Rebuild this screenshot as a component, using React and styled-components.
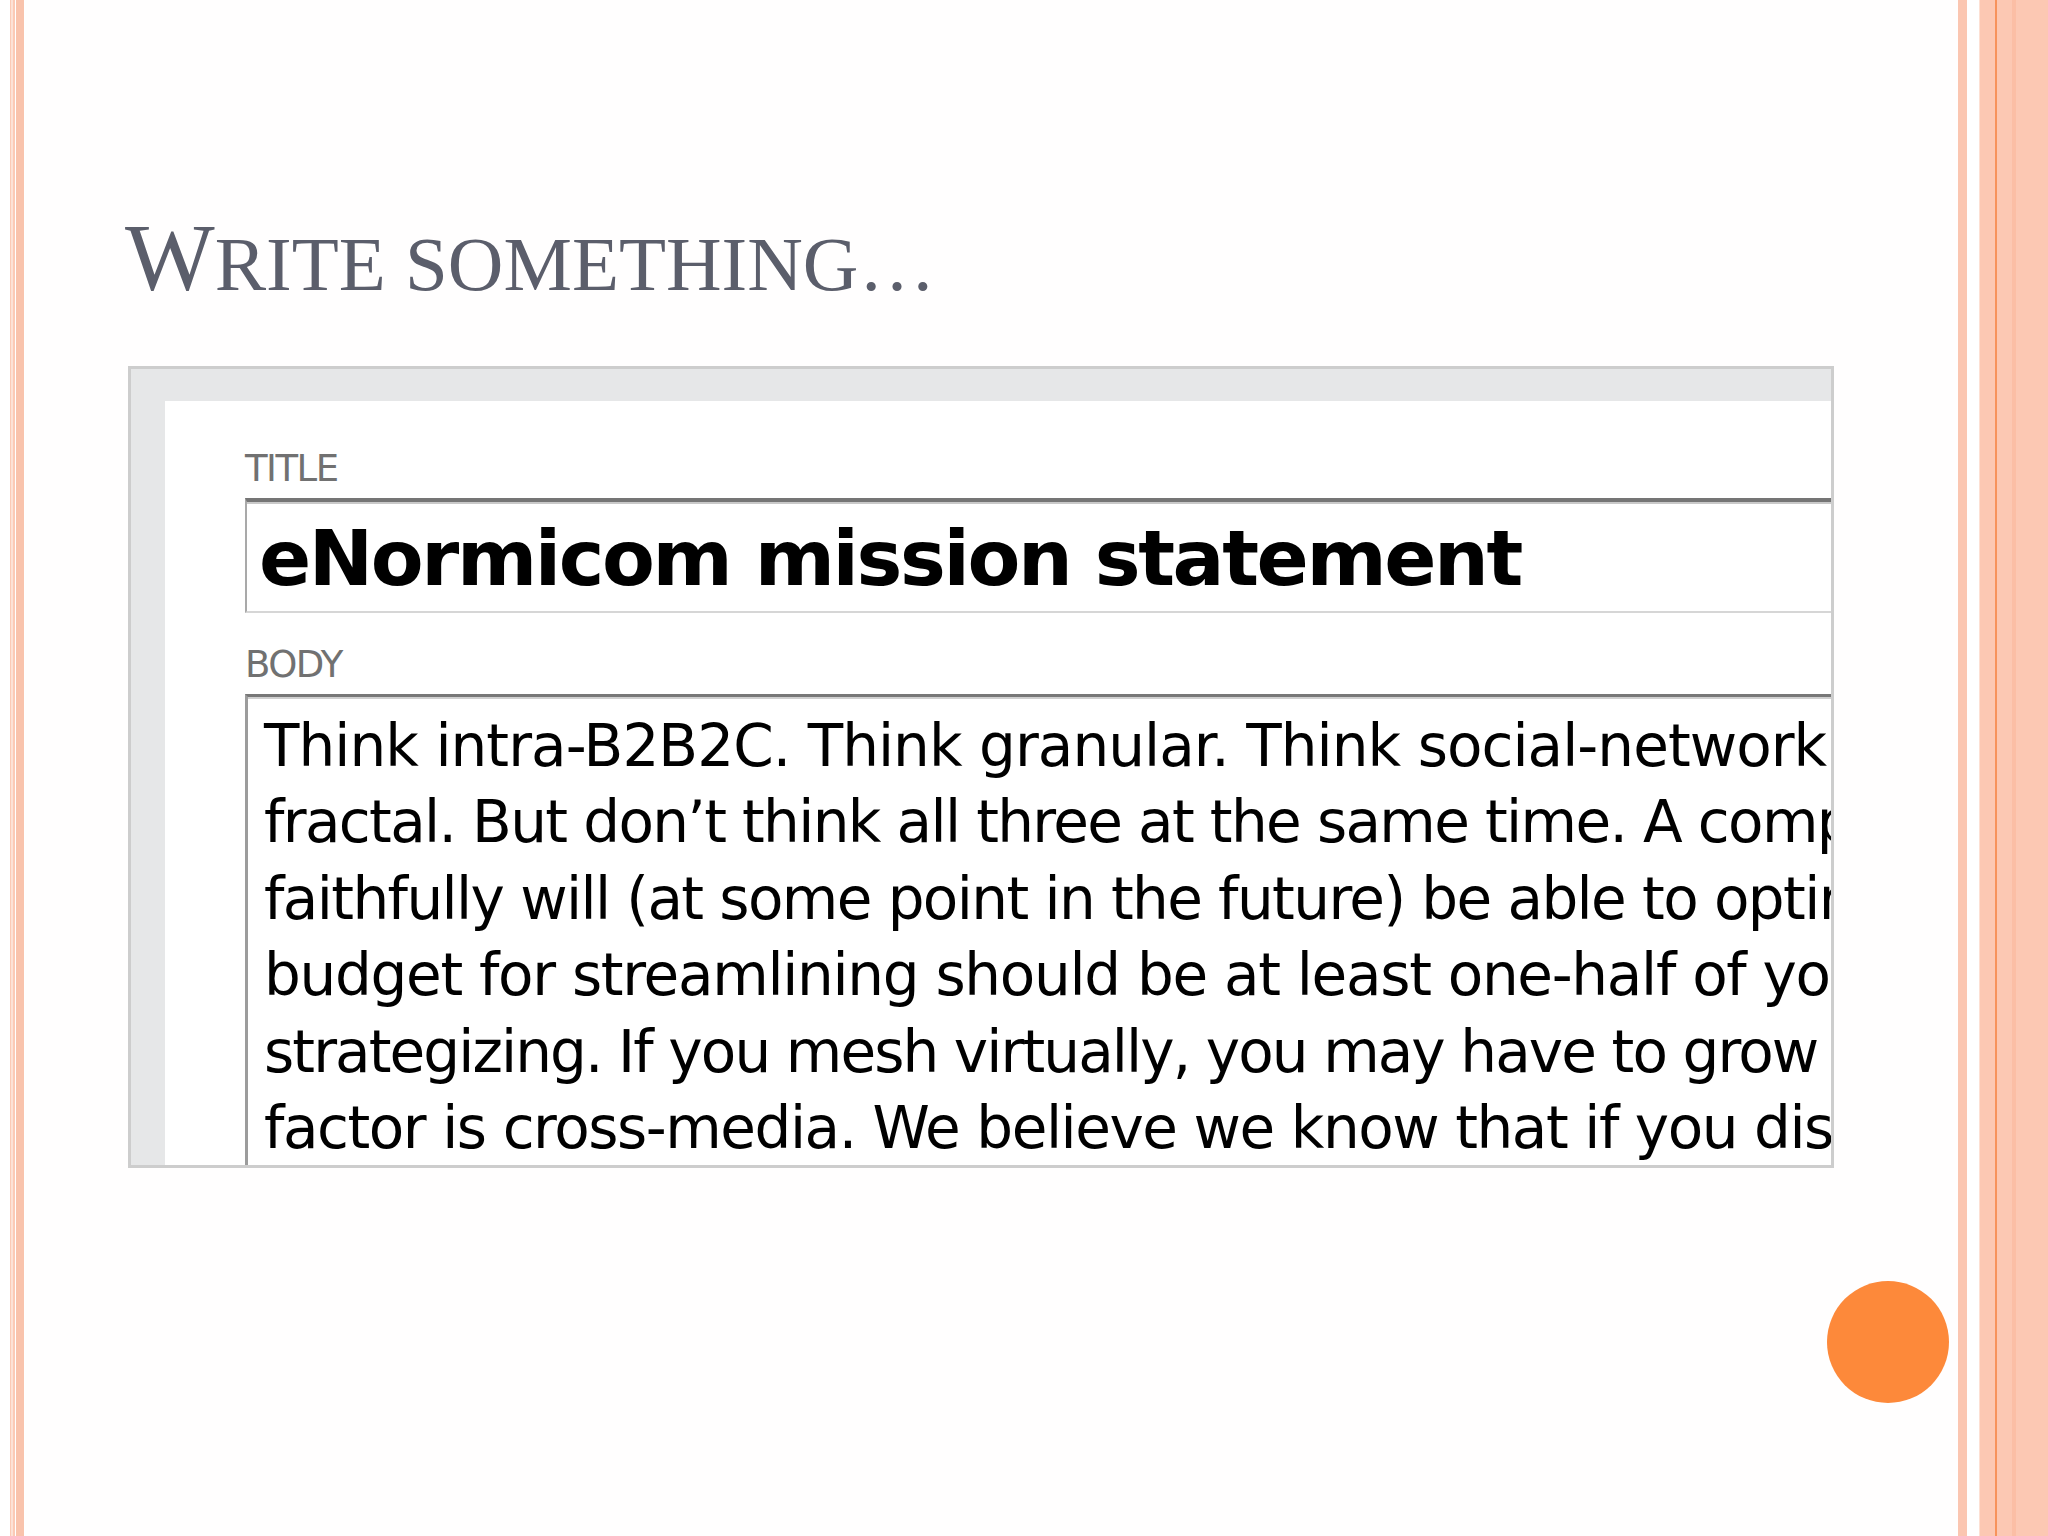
import React from "react";
import styled, { createGlobalStyle } from "styled-components";

const GlobalStyle = createGlobalStyle`
  html, body {
    margin: 0;
    padding: 0;
    background: #ffffff;
  }
  #root {
    height: 100vh;
  }
`;

const Page = styled.div`
  display: flex;
  height: 1536px;
  width: 2048px;
  overflow: hidden;
  background: #fffefe;
`;

const LeftEdge = styled.div`
  flex: 0 0 25px;
  background: linear-gradient(
    to right,
    #ffffff 0 10px,
    #fbcab6 10px 11px,
    #fde2d6 11px 13px,
    #fbcab6 13px 15px,
    #ffffff 15px 16px,
    #f9c3ac 16px 24px,
    #ffffff 24px 25px
  );
`;

const RightEdge = styled.div`
  flex: 0 0 90px;
  background: linear-gradient(
    to right,
    #fbc6b1 0 9px,
    #ffffff 9px 21px,
    #fde0d3 21px 22px,
    #fcc8b3 22px 37px,
    #f7935c 37px 39px,
    #fcc8b3 39px 54px,
    #fbbea5 54px 58px,
    #fcc8b3 58px 90px
  );
`;

const Main = styled.main`
  flex: 1;
  display: flex;
  flex-direction: column;
  padding: 203px 0 0 100px;
  min-width: 0;
`;

const Heading = styled.h1`
  margin: 0;
  font-family: "Liberation Serif", "Times New Roman", serif;
  font-weight: normal;
  font-size: 95px;
  color: #5b5e6b;
  line-height: 110px;
  white-space: nowrap;
`;

const Initial = styled.span`
  font-size: 95px;
`;

const SmallCaps = styled.span`
  font-size: 77px;
  text-transform: uppercase;
`;

const Panel = styled.section`
  margin: 47px 0 0 3px;
  width: 1706px;
  height: 802px;
  box-sizing: border-box;
  border: 3px solid #cdcdcd;
  background: #e6e7e8;
  padding: 32px 0 0 34px;
  display: flex;
`;

const Sheet = styled.div`
  flex: 1;
  background: #ffffff;
  overflow: hidden;
  padding: 48px 0 0 80px;
  display: flex;
  flex-direction: column;
`;

const Label = styled.div`
  font-family: "DejaVu Sans", Verdana, sans-serif;
  font-size: 37px;
  line-height: 40px;
  letter-spacing: -1.5px;
  color: #717171;
  margin-top: ${(p) => p.$top || 0}px;
  margin-bottom: 9px;
`;

const TitleField = styled.div`
  width: calc(100% + 40px);
  box-sizing: border-box;
  border-top: 4px solid #757575;
  border-left: 2px solid #a9a9a9;
  border-bottom: 2px solid #d6d6d6;
  box-shadow: inset 0 2px 0 #c9c9c9;
  padding: 12px 0 7px 12px;
  font-family: "DejaVu Sans", Verdana, sans-serif;
  font-weight: bold;
  font-size: 77px;
  line-height: 90px;
  letter-spacing: -2.4px;
  color: #000000;
  white-space: nowrap;
`;

const BodyField = styled.div`
  flex: 1;
  width: calc(100% + 40px);
  box-sizing: border-box;
  border-top: 3px solid #787878;
  border-left: 3px solid #9c9c9c;
  box-shadow: inset 0 2px 0 #d0d0d0;
  padding: 11px 0 0 16px;
  font-family: "DejaVu Sans", Verdana, sans-serif;
  font-size: 58px;
  line-height: 76.4px;
  color: #000000;
`;

const BodyLine = styled.div`
  white-space: nowrap;
  letter-spacing: ${(p) => p.$track}px;
`;

const Dot = styled.div`
  align-self: flex-end;
  margin: 113px 9px 0 0;
  width: 122px;
  height: 122px;
  border-radius: 50%;
  background: #fd893a;
`;

const bodyLines = [
  { text: "Think intra-B2B2C. Think granular. Think social-networking", track: -0.95 },
  { text: "fractal. But don’t think all three at the same time. A company that", track: -1.65 },
  { text: "faithfully will (at some point in the future) be able to optimize", track: -1.6 },
  { text: "budget for streamlining should be at least one-half of your", track: -1.3 },
  { text: "strategizing. If you mesh virtually, you may have to grow your", track: -1.9 },
  { text: "factor is cross-media. We believe we know that if you disintermediate", track: -1.45 },
];

export default function App() {
  return (
    <>
      <GlobalStyle />
      <Page>
        <LeftEdge />
        <Main>
          <Heading>
            <Initial>W</Initial>
            <SmallCaps>rite something…</SmallCaps>
          </Heading>
          <Panel>
            <Sheet>
              <Label>TITLE</Label>
              <TitleField>eNormicom mission statement</TitleField>
              <Label $top={32}>BODY</Label>
              <BodyField>
                {bodyLines.map((line, i) => (
                  <BodyLine key={i} $track={line.track}>
                    {line.text}
                  </BodyLine>
                ))}
              </BodyField>
            </Sheet>
          </Panel>
          <Dot />
        </Main>
        <RightEdge />
      </Page>
    </>
  );
}
